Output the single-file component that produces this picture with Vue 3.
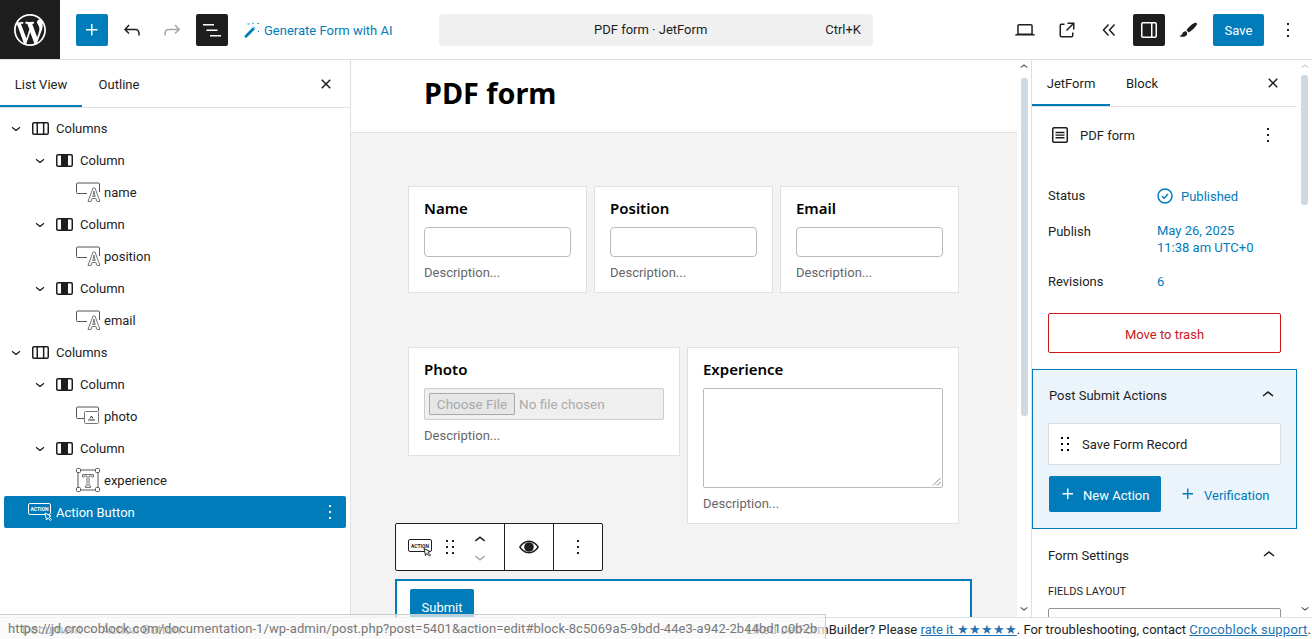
<script setup>
import { h } from 'vue'

const P = {
  plus: 'M11 12.5V17.5H12.5V12.5H17.5V11H12.5V6H11V11H6V12.5H11Z',
  undo: 'M18.3 11.7c-.6-.6-1.4-.9-2.3-.9H6.7l2.9-3.3-1.1-1-4.5 5L8.5 16l1-1-2.7-2.7H16c.5 0 .9.2 1.3.5 1 1 1 3.4 1 4.5v.3h1.5v-.2c0-1.5 0-4.3-1.5-5.7z',
  redo: 'M15.6 6.5l-1.1 1 2.9 3.3H8c-.9 0-1.7.3-2.3.9-1.4 1.5-1.4 4.2-1.4 5.6v.2h1.5v-.3c0-1.1 0-3.5 1-4.5.3-.3.7-.5 1.3-.5h9.2L14.5 15l1.1 1.1 4.6-4.6-4.6-5z',
  list: 'M3 6h11v1.5H3V6Zm3.5 5.5h11V13h-11v-1.5ZM21 17H10v1.5h11V17Z',
  close: 'M12 13.06l3.712 3.713 1.061-1.06L13.061 12l3.712-3.712-1.06-1.06L12 10.938 8.288 7.227l-1.061 1.06L10.939 12l-3.712 3.712 1.06 1.061L12 13.061z',
  laptop: 'M20.5 16h-.7V8c0-1.1-.9-2-2-2H6.2c-1.1 0-2 .9-2 2v8h-.7c-.8 0-1.5.7-1.5 1.5h20c0-.8-.7-1.5-1.5-1.5zM5.7 8c0-.3.2-.5.5-.5h11.6c.3 0 .5.2.5.5v7.6H5.7V8z',
  external: 'M19.5 4.5h-7V6h4.44l-5.97 5.97 1.06 1.06L18 7.06v4.44h1.5v-7Zm-13 1a2 2 0 0 0-2 2v10a2 2 0 0 0 2 2h10a2 2 0 0 0 2-2v-3H17v3a.5.5 0 0 1-.5.5h-10a.5.5 0 0 1-.5-.5v-10a.5.5 0 0 1 .5-.5h3V5.5h-3Z',
  side: 'M18 4H6c-1.1 0-2 .9-2 2v12c0 1.1.9 2 2 2h12c1.1 0 2-.9 2-2V6c0-1.1-.9-2-2-2zm-4 14.5H6c-.3 0-.5-.2-.5-.5V6c0-.3.2-.5.5-.5h8v13zm4.5-.5c0 .3-.2.5-.5.5h-2.5v-13H18c.3 0 .5.2.5.5v12z',
  more: 'M13 19h-2v-2h2v2zm0-6h-2v-2h2v2zm0-6h-2V5h2v2z',
  drag: 'M8 7h2V5H8v2zm0 6h2v-2H8v2zm0 6h2v-2H8v2zm6-14v2h2V5h-2zm0 8h2v-2h-2v2zm0 6h2v-2h-2v2z',
  up: 'M6.5 12.4L12 8l5.5 4.4-.9 1.2L12 10l-4.6 3.6-.9-1.2z',
  down: 'M17.5 11.6L12 16l-5.5-4.4.9-1.2L12 14l4.6-3.6.9 1.2z',
  doc: 'M18 4H6c-1.1 0-2 .9-2 2v12c0 1.1.9 2 2 2h12c1.1 0 2-.9 2-2V6c0-1.1-.9-2-2-2zm.5 14c0 .3-.2.5-.5.5H6c-.3 0-.5-.2-.5-.5V6c0-.3.2-.5.5-.5h12c.3 0 .5.2.5.5v12zM7.5 10.2h9V8.8h-9v1.4zm0 2.6h9v-1.4h-9v1.4zm0 2.6h9V14h-9v1.4z',
  columns: 'M19 6H6c-1.1 0-2 .9-2 2v9c0 1.1.9 2 2 2h13c1.1 0 2-.9 2-2V8c0-1.1-.9-2-2-2zm-4.1 1.5v10H10v-10h4.9zM5.5 17V8c0-.3.2-.5.5-.5h2.5v10H6c-.3 0-.5-.2-.5-.5zm14 0c0 .3-.2.5-.5.5h-2.6v-10H19c.3 0 .5.2.5.5v9z',
  column: 'M19 6H6c-1.1 0-2 .9-2 2v9c0 1.1.9 2 2 2h13c1.1 0 2-.9 2-2V8c0-1.1-.9-2-2-2zM6 17.5c-.3 0-.5-.2-.5-.5V8c0-.3.2-.5.5-.5h3v10H6zm13.5-.5c0 .3-.2.5-.5.5h-3v-10h3c.3 0 .5.2.5.5v9z',
  wp: 'M20 10c0-5.51-4.49-10-10-10C4.48 0 0 4.49 0 10c0 5.52 4.48 10 10 10 5.51 0 10-4.48 10-10zM7.78 15.37L4.37 6.22c.55-.02 1.17-.08 1.17-.08.5-.06.44-1.13-.06-1.11 0 0-1.45.11-2.37.11-.18 0-.37 0-.58-.01C4.12 2.69 6.87 1.11 10 1.11c2.33 0 4.45.87 6.05 2.34-.68-.11-1.65.39-1.65 1.58 0 .74.45 1.36.9 2.1.35.61.55 1.36.55 2.46 0 1.49-1.4 5-1.4 5l-3.03-8.37c.54-.02.82-.17.82-.17.5-.05.44-1.25-.06-1.22 0 0-1.44.12-2.38.12-.87 0-2.33-.12-2.33-.12-.5-.03-.56 1.2-.06 1.22l.92.08 1.26 3.41zM17.41 10c.24-.64.74-1.87.43-4.25.7 1.29 1.05 2.71 1.05 4.25 0 3.29-1.73 6.24-4.4 7.78.97-2.59 1.94-5.2 2.92-7.78zM6.1 18.09C3.12 16.65 1.11 13.53 1.11 10c0-1.3.23-2.48.72-3.59C3.25 10.3 4.67 14.2 6.1 18.09zm4.03-6.63l2.58 6.98c-.86.29-1.76.45-2.71.45-.79 0-1.57-.11-2.29-.33.81-2.38 1.62-4.74 2.42-7.1z'
}

const Ico = (p) => h('svg', {
  viewBox: p.n === 'wp' ? '0 0 20 20' : '0 0 24 24',
  width: p.s || 24, height: p.s || 24, fill: 'currentColor', style: 'display:block;flex:none'
}, h('path', { d: P[p.n] }))
Ico.props = ['n', 's']

const tree = [
  { lv: 0, icon: 'columns', text: 'Columns', chev: true },
  { lv: 1, icon: 'column', text: 'Column', chev: true },
  { lv: 2, icon: 'field', text: 'name' },
  { lv: 1, icon: 'column', text: 'Column', chev: true },
  { lv: 2, icon: 'field', text: 'position' },
  { lv: 1, icon: 'column', text: 'Column', chev: true },
  { lv: 2, icon: 'field', text: 'email' },
  { lv: 0, icon: 'columns', text: 'Columns', chev: true },
  { lv: 1, icon: 'column', text: 'Column', chev: true },
  { lv: 2, icon: 'photo', text: 'photo' },
  { lv: 1, icon: 'column', text: 'Column', chev: true },
  { lv: 2, icon: 'area', text: 'experience' }
]
const topFields = ['Name', 'Position', 'Email']
</script>

<template>
  <div class="app">
    <header class="top">
      <div class="logo"><Ico n="wp" s="32" /></div>
      <button class="ib blue first"><Ico n="plus" /></button>
      <button class="ib undo"><Ico n="undo" /></button>
      <button class="ib faded"><Ico n="redo" /></button>
      <button class="ib dark"><Ico n="list" /></button>
      <div class="gen">
        <svg class="wand" width="16" height="16" viewBox="0 0 16 16">
          <path d="M1 13.200 9.600 4.600l2 2L3 15.200a1.200 1.200 0 0 1-2-2Z" fill="#007cba" />
          <path d="M9 5.200l2 2" stroke="#fff" stroke-width="1" />
          <path d="M4 1.500l1 1m0-1-1 1M13.500 1l1 1m0-1-1 1M14 9l1 1m0-1-1 1M8.500 .8l.8.8m0-.8-.8.8" stroke="#007cba" stroke-width="1" />
        </svg>
        <span class="gen-t">Generate Form with AI</span>
      </div>
      <div class="cmd"><span class="cmd-t">PDF form · JetForm</span><span class="cmd-k">Ctrl+K</span></div>
      <div class="top-r">
        <span class="ic w1"><Ico n="laptop" /></span>
        <span class="ic w2"><Ico n="external" /></span>
        <span class="ic w3">
          <svg width="24" height="24" viewBox="0 0 24 24" fill="none" stroke="#1e1e1e" stroke-width="1.5"><path d="M11.500 6.500 6.500 12l5 5.500M17.500 6.500 12.500 12l5 5.500" /></svg>
        </span>
        <button class="ib dark"><Ico n="side" /></button>
        <span class="ic w4">
          <svg width="24" height="24" viewBox="0 0 24 24"><path d="M21 5.500c-.5-.9-1.500-1-2.600-.5-3 1.400-6 4-8 7.200l2.400 2.300c3.300-2 6-4.800 7.800-7.400.4-.6.600-1.200.4-1.600ZM9.500 13.300c-1.700 0-2.800 1-3.200 2.500-.3 1-1.100 1.700-2.800 2.200 1.500 1 3.500 1.100 5.200.5 1.600-.6 2.500-1.800 2.500-3-.1-1.200-.8-2-1.700-2.200Z" fill="#1e1e1e" /></svg>
        </span>
        <button class="save">Save</button>
        <span class="ic w5"><Ico n="more" /></span>
      </div>
    </header>

    <div class="body">
      <aside class="left">
        <div class="tabs ltabs">
          <span class="tab on lt1">List View</span>
          <span class="tab lt2">Outline</span>
          <span class="x"><Ico n="close" /></span>
        </div>
        <ul class="tree">
          <li v-for="(r, i) in tree" :key="i" class="row" :class="'lv' + r.lv">
            <span class="chev"><svg v-if="r.chev" width="24" height="24" viewBox="0 0 24 24" fill="#1e1e1e"><path :d="P.down" transform="translate(2.400 2.400) scale(.8)" /></svg></span>
            <Ico v-if="r.icon === 'columns' || r.icon === 'column'" :n="r.icon" />
            <svg v-else-if="r.icon === 'field'" width="24" height="24" viewBox="0 0 24 24" fill="none" stroke="#555" stroke-width="1">
              <path d="M11 13.500H1.500a1 1 0 0 1-1-1V4a1 1 0 0 1 1-1h21a1 1 0 0 1 1 1v8" />
              <path d="M12 21.500h3l1-3h4l1 3h3L19 8h-2ZM16.800 16.500 18 11l1.200 5.500Z" stroke="#777" fill="#fff" />
            </svg>
            <svg v-else-if="r.icon === 'photo'" width="24" height="24" viewBox="0 0 24 24" fill="none" stroke="#555" stroke-width="1">
              <path d="M8 14.500H1.500a1 1 0 0 1-1-1V4a1 1 0 0 1 1-1h20a1 1 0 0 1 1 1v3" />
              <rect x="8.500" y="7.500" width="14" height="12" rx="1" stroke="#777" />
              <path d="M12 16h7M14 14.500l1.500-2.500 1.500 2.500" stroke="#333" />
            </svg>
            <svg v-else width="24" height="24" viewBox="0 0 24 24" fill="none" stroke="#555" stroke-width="1">
              <rect x="2" y="2" width="20" height="20" />
              <g fill="#fff"><rect x=".5" y=".5" width="4" height="4" rx="1" /><rect x="19.500" y=".5" width="4" height="4" rx="1" /><rect x=".5" y="19.500" width="4" height="4" rx="1" /><rect x="19.500" y="19.500" width="4" height="4" rx="1" /></g>
              <path d="M6.500 9V6.500h11V9h-1.500V8H13v10h1.500v1.500h-5V18H11V8H8v1Z" stroke="#777" />
            </svg>
            <span class="lbl">{{ r.text }}</span>
          </li>
          <li class="row sel">
            <span class="chev"></span>
            <svg width="24" height="24" viewBox="0 0 24 24" fill="none" stroke="#fff" stroke-width="1"><rect x=".5" y="3.500" width="22" height="11" rx="1.500" /><text x="11.500" y="11" font-size="5" font-weight="700" fill="#fff" stroke="none" text-anchor="middle" font-family="Roboto, sans-serif">ACTION</text><path d="M17 13l1.500 7 1.300-2 2.700 2.500 1-1-2.500-2.500 2-1Z" fill="#007cba" /></svg>
            <span class="lbl">Action Button</span>
            <span class="sel-m"><Ico n="more" /></span>
          </li>
        </ul>
      </aside>

      <main class="canvas">
        <div class="title-wrap"><h1 class="title">PDF form</h1></div>
        <div class="fields">
          <div class="grid g3">
            <div v-for="f in topFields" :key="f" class="card">
              <div class="fl">{{ f }}</div>
              <div class="inp"></div>
              <div class="desc">Description...</div>
            </div>
          </div>
          <div class="grid g2">
            <div class="card">
              <div class="fl">Photo</div>
              <div class="file"><span class="fbtn">Choose File</span><span class="fno">No file chosen</span></div>
              <div class="desc">Description...</div>
            </div>
            <div class="card">
              <div class="fl">Experience</div>
              <div class="area">
                <svg class="grip" width="9" height="9" viewBox="0 0 9 9" stroke="#888" stroke-width="1"><path d="M1 8.500 8.500 1M5 8.500 8.500 5" /></svg>
              </div>
              <div class="desc">Description...</div>
            </div>
          </div>
        </div>
        <div class="action-block">
          <div class="btb">
            <div class="bs s1">
              <svg width="26" height="24" viewBox="0 0 26 24" fill="none" stroke="#1e1e1e" stroke-width="1"><rect x=".5" y="4.500" width="23" height="12" rx="1.500" /><text x="12" y="12.500" font-size="5" font-weight="700" fill="#1e1e1e" stroke="none" text-anchor="middle" font-family="Roboto, sans-serif">ACTION</text><path d="M16 13.500l1.500 7 1.300-2 2.700 2.500 1-1-2.500-2.500 2-1Z" fill="#fff" /></svg>
              <span class="bdrag"><Ico n="drag" /></span>
              <span class="updn"><Ico n="up" s="22" /><span class="dn"><Ico n="down" s="22" /></span></span>
            </div>
            <div class="bs s2">
              <svg width="24" height="24" viewBox="0 0 24 24"><path d="M12 5.500c-4.500 0-8 3-10 6.500 2 3.500 5.500 6.500 10 6.500s8-3 10-6.500c-2-3.500-5.500-6.500-10-6.500Zm0 11.500c-3.400 0-6.300-2.100-8.200-5 1.900-2.900 4.800-5 8.200-5s6.300 2.100 8.200 5c-1.900 2.900-4.800 5-8.200 5Z" fill="#1e1e1e" /><circle cx="12" cy="12" r="4.800" fill="#1e1e1e" /></svg>
            </div>
            <div class="bs s3"><Ico n="more" /></div>
          </div>
          <button class="submit">Submit</button>
        </div>
      </main>

      <div class="sbar sbar-c">
        <span class="arr dk"><Ico n="up" s="16" /></span>
        <span class="thumb tc"></span>
        <span class="arr dk bot"><Ico n="down" s="16" /></span>
      </div>

      <aside class="right">
        <div class="rp">
          <div class="tabs rtabs">
            <span class="tab on rt1">JetForm</span>
            <span class="tab rt2">Block</span>
            <span class="x rx"><Ico n="close" /></span>
          </div>
          <div class="doc">
            <Ico n="doc" />
            <span class="doc-t">PDF form</span>
            <span class="doc-m"><Ico n="more" /></span>
          </div>
          <div class="meta m1"><span class="mk">Status</span><span class="mv st">
            <svg width="16" height="16" viewBox="0 0 16 16" fill="none" stroke="#007cba"><circle cx="8" cy="8" r="7" stroke-width="1.500" /><path d="M5 8.200l2.200 2L11 6" stroke-width="1.500" /></svg>
            <span class="pub">Published</span></span></div>
          <div class="meta m2"><span class="mk pk">Publish</span><span class="mv">May 26, 2025<br>11:38 am UTC+0</span></div>
          <div class="meta m3"><span class="mk">Revisions</span><span class="mv">6</span></div>
          <button class="trash">Move to trash</button>
          <section class="psa">
            <div class="ph"><span>Post Submit Actions</span><Ico n="up" /></div>
            <div class="rec"><span class="recd"><Ico n="drag" /></span><span>Save Form Record</span></div>
            <div class="psa-btns">
              <button class="newa"><Ico n="plus" s="22" /><span class="nudge">New Action</span></button>
              <span class="veri"><Ico n="plus" s="22" /><span class="nudge">Verification</span></span>
            </div>
          </section>
          <section class="fs">
            <div class="ph"><span>Form Settings</span><Ico n="up" /></div>
            <div class="fs-l">FIELDS LAYOUT</div>
            <div class="sel-box"></div>
          </section>
        </div>
        <div class="sbar sbar-r">
          <span class="arr lt"><Ico n="up" s="16" /></span>
          <span class="thumb tr"></span>
          <span class="arr dk bot"><Ico n="down" s="16" /></span>
        </div>
      </aside>
    </div>

    <footer class="foot">
      <span class="crumb">Document</span>
      <span class="crumb-s">›</span>
      <span class="crumb c2">Action Button</span>
      <span class="foot-t">Liked JetFormBuilder? Please <a class="lnk">rate it ★★★★★</a>. For troubleshooting, contact <a class="lnk wide">Crocoblock support</a>.</span>
    </footer>
    <div class="status">https://jd.crocoblock.com/documentation-1/wp-admin/post.php?post=5401&amp;action=edit#block-8c5069a5-9bdd-44e3-a942-2b44bd1c0b2b</div>
  </div>
</template>

<style>
html, body { margin: 0; background: #fff; overflow: hidden; }
</style>

<style scoped>
* { box-sizing: border-box; }
.app { position: relative; width: 1312px; height: 639px; overflow: hidden; font-family: Roboto, "Noto Sans", sans-serif; font-size: 13px; color: #1e1e1e; background: #fff; }
button { font-family: inherit; border: 0; padding: 0; cursor: pointer; }
.nudge { padding-top: 2px; }

.top { height: 60px; display: flex; align-items: center; border-bottom: 1px solid #e0e0e0; }
.logo { width: 60px; height: 59px; background: #1e1e1e; color: #fff; display: flex; align-items: center; justify-content: center; flex: none; align-self: flex-start; }
.ib { width: 32px; height: 32px; border-radius: 2px; background: transparent; color: #1e1e1e; display: flex; align-items: center; justify-content: center; flex: none; margin-left: 8px; }
.blue { background: #007cba; color: #fff; }
.first { margin-left: 16px; }
.dark { background: #1e1e1e; color: #fff; }
.faded { color: #a6a6a6; }
.gen { margin-left: 16px; display: flex; align-items: center; gap: 4px; color: #007cba; width: 170px; flex: none; white-space: nowrap; }
.gen-t { padding-top: 2px; }
.cmd { margin-left: 25px; width: 434px; height: 32px; background: #f0f0f0; border-radius: 4px; display: flex; align-items: center; justify-content: space-between; padding: 0 12px 0 155px; flex: none; font-size: 13px; color: #1e1e1e; }
.top-r { margin-left: 140px; display: flex; align-items: center; flex: none; }
.ic { display: flex; align-items: center; justify-content: center; width: 24px; height: 24px; }
.w2 { margin-left: 18px; }
.w3 { margin-left: 18px; }
.top-r .ib { margin-left: 12px; }
.w4 { margin-left: 11px; }
.save { width: 51px; height: 32px; background: #007cba; color: #fff; font-size: 13px; border-radius: 2px; margin-left: 13px; padding-top: 2px; }
.w5 { margin-left: 12px; }

.body { height: 557px; display: flex; }
.left { width: 351px; flex: none; border-right: 1px solid #e0e0e0; }
.tabs { display: flex; align-items: center; position: relative; border-bottom: 1px solid #e0e0e0; }
.ltabs { height: 48px; }
.tab { height: 100%; display: flex; align-items: center; justify-content: center; flex: none; }
.ltabs .tab { padding-top: 2px; }
.tab.on { box-shadow: inset 0 -2px 0 #007cba; }
.lt1 { width: 82px; }
.lt2 { width: 74px; }
.x { margin-left: auto; margin-right: 12px; display: flex; }
.tree { list-style: none; margin: 4px 0 0; padding: 0; }
.row { height: 32px; display: flex; align-items: center; }
.lv0 { padding-left: 4px; }
.lv1 { padding-left: 28px; }
.lv2 { padding-left: 52px; }
.chev { width: 24px; height: 24px; flex: none; }
.lbl { margin-left: 4px; white-space: nowrap; }
.sel { background: #007cba; color: #fff; margin: 0 4px; border-radius: 2px; position: relative; padding-left: 0; }
.sel-m { margin-left: auto; margin-right: 4px; display: flex; }

.canvas { width: 666px; flex: none; background: #f3f3f3; overflow: hidden; }
.title-wrap { height: 73px; background: #fff; border-bottom: 1px solid #e0e0e0; padding: 14px 0 0 73px; }
.title { margin: 0; font-family: "Noto Sans", sans-serif; font-size: 28.800px; line-height: 38px; font-weight: 700; color: #000; }
.fields { padding: 53px 0 0 57px; width: 608px; display: flex; flex-direction: column; gap: 54px; }
.grid { display: grid; gap: 7px; align-items: start; }
.g3 { grid-template-columns: repeat(3, 179px); }
.g2 { grid-template-columns: repeat(2, 272px); }
.card { background: #fff; border: 1px solid #e0e0e0; padding: 11px 15px 9px; }
.fl { font-family: "Noto Sans", sans-serif; font-size: 15px; line-height: 20px; font-weight: 600; color: #000; margin-bottom: 9px; }
.inp { height: 30px; border: 1px solid #bbb; border-radius: 4px; background: #fff; }
.desc { font-size: 13px; line-height: 20px; color: #666; margin-top: 6px; }
.file { height: 32px; background: #efefef; border: 1px solid #ccc; border-radius: 2px; padding: 4px; display: flex; align-items: center; color: #aaa; font-size: 13.500px; }
.fbtn { width: 86px; height: 22px; border: 1px solid #aaa; border-radius: 1px; background: #e6e6e6; display: flex; align-items: center; justify-content: center; flex: none; }
.fno { margin-left: 4px; }
.area { height: 100px; border: 1px solid #bbb; border-radius: 2px; position: relative; background: #fff; }
.grip { position: absolute; right: 1px; bottom: 1px; }

.action-block { position: relative; margin: 55px 0 0 44px; width: 577px; height: 100px; background: #fff; border: 2px solid #007cba; padding: 8px 13px; }
.btb { position: absolute; left: -2px; top: -58px; width: 208px; height: 48px; background: #fff; border: 1px solid #1e1e1e; border-radius: 2px; display: flex; }
.bs { height: 100%; display: flex; align-items: center; flex: none; }
.s1 { width: 109px; padding-left: 12px; border-right: 1px solid #1e1e1e; }
.bdrag { margin-left: 4px; display: flex; }
.updn { margin-left: 7px; display: flex; flex-direction: column; width: 22px; padding-top: 3px; }
.dn { color: #a8a8a8; display: block; margin-top: -5px; }
.s2 { width: 49px; justify-content: center; border-right: 1px solid #1e1e1e; }
.s3 { flex: 1; justify-content: center; }
.submit { width: 64px; height: 36px; background: #007cba; color: #fff; font-size: 13px; border-radius: 2px; }

.sbar { width: 14px; flex: none; background: #fff; display: flex; flex-direction: column; align-items: center; position: relative; }
.sbar-c { height: 557px; }
.sbar-r { width: 15px; height: 557px; }
.arr { height: 14px; display: flex; align-items: center; justify-content: center; }
.dk { color: #555; }
.lt { color: #cbcbcb; }
.bot { margin-top: auto; margin-bottom: 2px; }
.thumb { width: 7px; border-radius: 3px; background: #cfd9e2; flex: none; }
.tc { height: 338px; margin-top: 4px; }
.tr { height: 130px; margin-top: 1px; }

.right { width: 281px; flex: none; border-left: 1px solid #e0e0e0; display: flex; overflow: hidden; }
.rp { width: 265px; flex: none; }
.rtabs { height: 47px; border-bottom: 1px solid #e0e0e0; }
.rt1 { width: 78px; }
.rt2 { width: 62px; padding-left: 2px; }
.rx { margin-right: 12px; }
.doc { display: flex; align-items: center; padding-left: 16px; height: 40px; margin-top: 8px; }
.doc-t { margin-left: 8px; }
.doc-m { margin-left: auto; margin-right: 17px; display: flex; }
.meta { display: flex; padding-left: 16px; line-height: 17px; }
.mk { width: 109px; flex: none; }
.pk { padding-top: 1px; }
.mv { color: #007cba; }
.m1 { margin-top: 32px; height: 17px; align-items: center; }
.st { display: flex; align-items: center; gap: 8px; }
.pub { padding-top: 1px; }
.m2 { margin-top: 18px; }
.m3 { margin-top: 17px; }
.trash { display: block; margin: 23px 0 0 16px; width: 233px; height: 40px; background: #fff; border: 1px solid #cc1818; border-radius: 2px; color: #cc1818; font-size: 13px; padding-top: 2px; }
.psa { margin-top: 16px; height: 160px; background: #ebf4fa; border: 1px solid #007cba; padding: 0 16px; }
.ph { display: flex; align-items: center; justify-content: space-between; }
.psa .ph { height: 50px; }
.rec { margin-top: 3px; width: 233px; margin-left: -1px; height: 42px; background: #fff; border: 1px solid #ddd; display: flex; align-items: center; padding-left: 4px; gap: 5px; }
.recd { display: flex; color: #000; }
.psa-btns { margin-top: 11px; display: flex; align-items: center; }
.newa { width: 112px; height: 36px; background: #007cba; color: #fff; border-radius: 2px; font-size: 13px; display: flex; align-items: center; gap: 4px; padding-left: 8px; }
.veri { display: flex; align-items: center; color: #007cba; margin-left: 16px; gap: 5px; }
.fs { padding: 0 16px; }
.fs .ph { height: 52px; }
.fs-l { font-size: 11px; line-height: 14px; margin-top: 4px; }
.sel-box { width: 233px; height: 32px; border: 1px solid #949494; border-radius: 2px; margin-top: 9px; }

.foot { height: 22px; background: #fff; border-top: 1px solid #e0e0e0; display: flex; align-items: center; padding: 1px 1px 0 22px; font-size: 13px; white-space: nowrap; position: relative; }
.crumb-s { margin: 0 8px; }
.foot-t { margin-left: auto; font-size: 13px; }
.lnk { color: #2271b1; text-decoration: underline; }
.wide { letter-spacing: .25px; }
.status { position: absolute; left: 0; bottom: 0; width: 826px; height: 25px; background: rgba(248, 248, 248, .7); border-top: 1px solid #ccc; border-right: 1px solid #ccc; color: #777; font-size: 13px; letter-spacing: .065px; line-height: 25px; padding: 1px 0 0 8px; white-space: nowrap; overflow: hidden; }
</style>
